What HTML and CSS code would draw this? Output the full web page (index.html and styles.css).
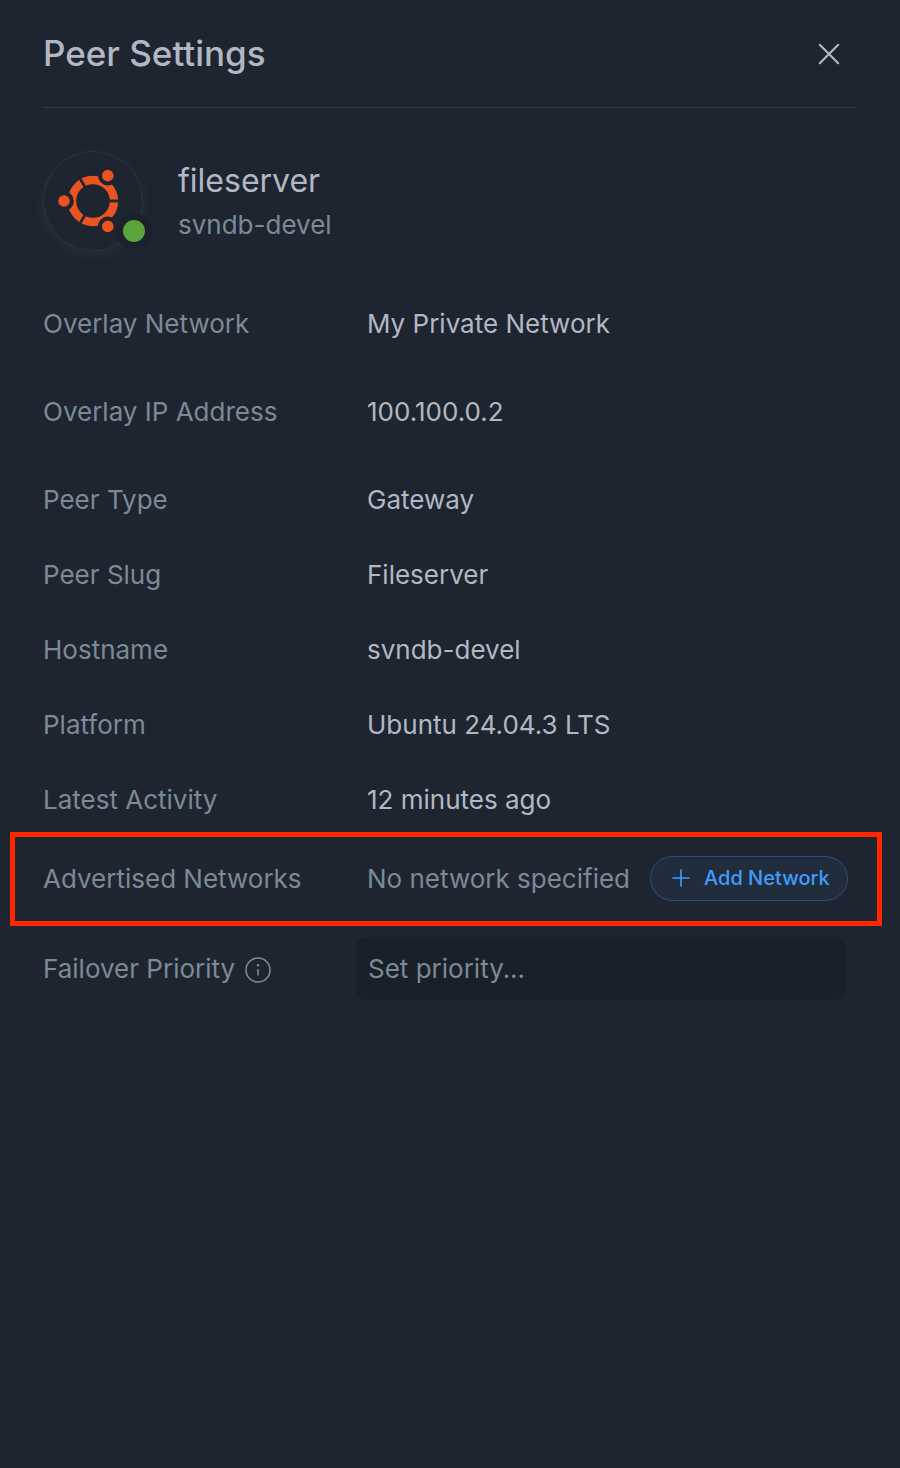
FILE: index.html
```html
<!DOCTYPE html>
<html lang="en">
<head>
  <meta charset="UTF-8">
  <meta name="viewport" content="width=device-width, initial-scale=1">
  <title>Peer Settings</title>
  <link rel="stylesheet" href="styles.css">
</head>
<body>
  <main class="panel">
    <header class="panel-header">
      <h1>Peer Settings</h1>
      <button type="button" class="close-btn" aria-label="Close">
        <svg width="22" height="22" viewBox="0 0 22 22" fill="none" stroke="currentColor" stroke-width="2.2" stroke-linecap="round">
          <path d="M1.8 1.8l18.4 18.4M20.2 1.8l-18.4 18.4"/>
        </svg>
      </button>
    </header>

    <section class="peer">
      <div class="avatar">
        <!-- ubuntu circle of friends -->
        <svg width="64" height="66" viewBox="-36 -33 64 66">
          <circle r="21" fill="none" stroke="#e95420" stroke-width="8.4"/>
          <g stroke="#1e2530" stroke-width="2.8">
            <path d="M15 0h12"/>
            <path d="M15 0h12" transform="rotate(120)"/>
            <path d="M15 0h12" transform="rotate(240)"/>
          </g>
          <g fill="#e95420" stroke="#1e2530" stroke-width="4">
            <circle cx="-29" r="7.8"/>
            <circle cx="14.8" cy="-25.4" r="7.8"/>
            <circle cx="14.8" cy="25.4" r="7.8"/>
          </g>
        </svg>
        <span class="status"></span>
      </div>
      <div class="peer-name">
        <h2>fileserver</h2>
        <p>svndb-devel</p>
      </div>
    </section>

    <dl class="details">
      <div class="row tall">
        <dt>Overlay Network</dt>
        <dd>My Private Network</dd>
      </div>
      <div class="row tall">
        <dt>Overlay IP Address</dt>
        <dd>100.100.0.2</dd>
      </div>
      <div class="row">
        <dt>Peer Type</dt>
        <dd>Gateway</dd>
      </div>
      <div class="row">
        <dt>Peer Slug</dt>
        <dd>Fileserver</dd>
      </div>
      <div class="row">
        <dt>Hostname</dt>
        <dd>svndb-devel</dd>
      </div>
      <div class="row">
        <dt>Platform</dt>
        <dd>Ubuntu 24.04.3 LTS</dd>
      </div>
      <div class="row">
        <dt>Latest Activity</dt>
        <dd>12 minutes ago</dd>
      </div>
      <div class="row highlight">
        <dt>Advertised Networks</dt>
        <dd class="networks">
          <span>No network specified</span>
          <button type="button" class="add-btn">
            <svg width="18" height="18" viewBox="0 0 18 18" fill="none" stroke="currentColor" stroke-width="1.6" stroke-linecap="round">
              <path d="M9 1v16M1 9h16"/>
            </svg>
            Add Network
          </button>
        </dd>
      </div>
      <div class="row">
        <dt>
          <label for="priority">Failover Priority</label>
          <svg class="info" width="26" height="26" viewBox="0 0 26 26" fill="none" stroke="currentColor" stroke-width="1.6">
            <circle cx="13" cy="13" r="12"/>
            <path d="M13 12v6.5"/>
            <circle cx="13" cy="8.2" r="1.2" fill="currentColor" stroke="none"/>
          </svg>
        </dt>
        <dd class="field"><input type="text" id="priority" placeholder="Set priority..."></dd>
      </div>
    </dl>
  </main>
</body>
</html>
```
FILE: styles.css
```css
* {
  box-sizing: border-box;
}

body {
  margin: 0;
  font-family: Inter, sans-serif;
  font-size: 26px;
  line-height: 36px;
  color: #b1b8c4;
  background-color: #1e2530;
}

h1, h2, p, dl, dd {
  margin: 0;
}

.panel {
  padding: 0 43px;
}

.panel-header {
  display: flex;
  justify-content: space-between;
  align-items: center;
  height: 108px;
  border-bottom: 1px solid #2c3945;
}

.panel-header h1 {
  padding-bottom: 2px;
  font-size: 35px;
  line-height: 48px;
  font-weight: 500;
}

.close-btn {
  display: flex;
  padding: 17px;
  border: none;
  background: none;
  color: inherit;
  cursor: pointer;
}

.peer {
  display: flex;
  align-items: center;
  gap: 35px;
  margin: 43px 0 49px;
}

.avatar {
  position: relative;
  display: flex;
  align-items: center;
  justify-content: center;
  width: 100px;
  height: 100px;
  padding-right: 9px;
  border: 1px solid #283640;
  border-radius: 50%;
  box-shadow: 0 4px 12px rgba(50, 70, 82, 0.3);
}

.status {
  position: absolute;
  right: -10px;
  bottom: 1px;
  width: 36px;
  height: 36px;
  border: 7px solid #1b222c;
  border-radius: 50%;
  background-color: #5ba33b;
}

.peer-name {
  padding-top: 3px;
}

.peer h2 {
  font-size: 32px;
  line-height: 44px;
  font-weight: 400;
}

.peer p {
  line-height: 44px;
  color: #7b8a96;
}

.row {
  display: grid;
  grid-template-columns: 313px 1fr;
  align-items: center;
  min-height: 48px;
  margin-bottom: 27px;
}

.row.tall {
  margin-bottom: 40px;
}

.row dt {
  display: flex;
  align-items: center;
  gap: 10px;
  color: #7b8a96;
}

.row dd {
  padding-left: 11px;
}

.row.highlight {
  height: 94px;
  margin: -19px -25px 11px -33px;
  padding: 0 23px 1px 28px;
  border: 5px solid #ff2600;
}

.row .networks {
  display: flex;
  align-items: center;
  gap: 20px;
  white-space: nowrap;
  color: #7b8a96;
}

.add-btn {
  display: flex;
  align-items: center;
  gap: 14px;
  height: 45px;
  padding: 0 17px 2px 21px;
  border: 1px solid #2b4f7d;
  border-radius: 23px;
  font-family: inherit;
  font-size: 20px;
  font-weight: 500;
  color: #409cff;
  background-color: #212d3d;
  cursor: pointer;
}

.info {
  margin-top: 3px;
}

.row .field {
  padding: 0 11px 0 0;
}

.field input {
  display: block;
  width: 100%;
  height: 63px;
  padding: 0 12px;
  border: none;
  border-radius: 10px;
  font: inherit;
  color: inherit;
  background-color: #1a2029;
}

.field input::placeholder {
  color: #7b8a96;
}
```
